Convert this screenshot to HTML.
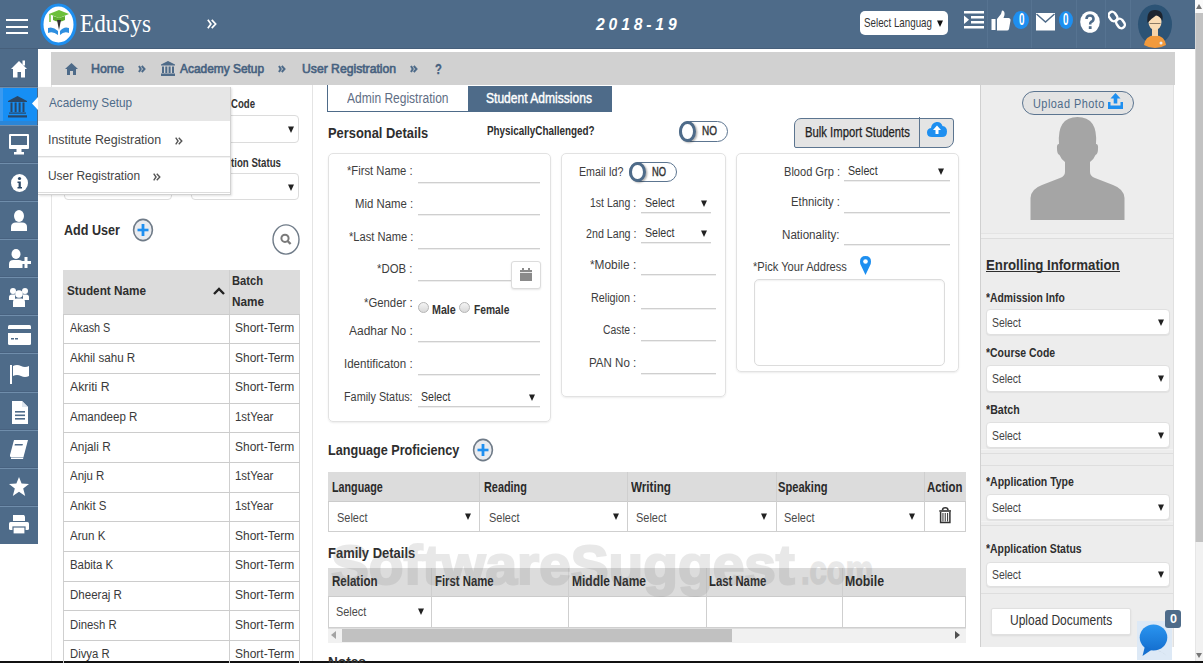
<!DOCTYPE html><html><head><meta charset="utf-8"><style>
html,body{margin:0;padding:0;width:1203px;height:663px;overflow:hidden;background:#fff;position:relative;}
.t{position:absolute;white-space:nowrap;transform-origin:0 0;}
.r{position:absolute;}
</style></head><body>
<div class="r" style="left:0px;top:0px;width:1195px;height:49px;background:#4e6b89;"></div>
<div class="r" style="left:0px;top:48px;width:1195px;height:1px;background:#465f7b;"></div>
<div class="r" style="left:0px;top:49px;width:38px;height:495px;background:#4e6b89;"></div>
<div class="r" style="left:0px;top:86px;width:38px;height:1px;background:#486280;"></div>
<div class="r" style="left:0px;top:87px;width:38px;height:1px;background:#6f8dab;"></div>
<div class="r" style="left:0px;top:124px;width:38px;height:1px;background:#486280;"></div>
<div class="r" style="left:0px;top:125px;width:38px;height:1px;background:#6f8dab;"></div>
<div class="r" style="left:0px;top:162px;width:38px;height:1px;background:#486280;"></div>
<div class="r" style="left:0px;top:163px;width:38px;height:1px;background:#6f8dab;"></div>
<div class="r" style="left:0px;top:200px;width:38px;height:1px;background:#486280;"></div>
<div class="r" style="left:0px;top:201px;width:38px;height:1px;background:#6f8dab;"></div>
<div class="r" style="left:0px;top:238px;width:38px;height:1px;background:#486280;"></div>
<div class="r" style="left:0px;top:239px;width:38px;height:1px;background:#6f8dab;"></div>
<div class="r" style="left:0px;top:276px;width:38px;height:1px;background:#486280;"></div>
<div class="r" style="left:0px;top:277px;width:38px;height:1px;background:#6f8dab;"></div>
<div class="r" style="left:0px;top:314px;width:38px;height:1px;background:#486280;"></div>
<div class="r" style="left:0px;top:315px;width:38px;height:1px;background:#6f8dab;"></div>
<div class="r" style="left:0px;top:352px;width:38px;height:1px;background:#486280;"></div>
<div class="r" style="left:0px;top:353px;width:38px;height:1px;background:#6f8dab;"></div>
<div class="r" style="left:0px;top:391px;width:38px;height:1px;background:#486280;"></div>
<div class="r" style="left:0px;top:392px;width:38px;height:1px;background:#6f8dab;"></div>
<div class="r" style="left:0px;top:429px;width:38px;height:1px;background:#486280;"></div>
<div class="r" style="left:0px;top:430px;width:38px;height:1px;background:#6f8dab;"></div>
<div class="r" style="left:0px;top:467px;width:38px;height:1px;background:#486280;"></div>
<div class="r" style="left:0px;top:468px;width:38px;height:1px;background:#6f8dab;"></div>
<div class="r" style="left:0px;top:505px;width:38px;height:1px;background:#486280;"></div>
<div class="r" style="left:0px;top:506px;width:38px;height:1px;background:#6f8dab;"></div>
<div class="r" style="left:0px;top:87.5px;width:37px;height:33.5px;background:#168ff5;"></div>
<div class="r" style="left:0px;top:121px;width:37px;height:4px;background:#2a86d8;"></div>
<div class="r" style="left:0px;top:87.5px;width:3px;height:33.5px;background:#3a9af0;"></div>
<div class="r" style="left:1195px;top:0px;width:8px;height:663px;background:#f1f1f1;border-left:1px solid #e6e6e6;box-sizing:border-box;"></div>
<div class="r" style="left:1195px;top:0px;width:8px;height:13px;background:#fafafa;"></div>
<div class="r" style="left:1195px;top:13px;width:8px;height:529px;background:#c2c2c2;border-left:1px solid #d6d6d6;box-sizing:border-box;"></div>
<svg class="r" style="left:1196px;top:653px" width="6" height="5" viewBox="0 0 6 5"><path d="M0 0 L6 0 L3 5 Z" fill="#777"/></svg>
<svg class="r" style="left:1196px;top:4px" width="6" height="5" viewBox="0 0 6 5"><path d="M0 5 L6 5 L3 0 Z" fill="#777"/></svg>
<div class="r" style="left:51px;top:52px;width:1124px;height:33px;background:#d1d1d1;"></div>
<div class="r" style="left:51px;top:85px;width:1px;height:578px;background:#e4e4e4;"></div>
<div class="r" style="left:312px;top:85px;width:1px;height:578px;background:#e4e4e4;"></div>
<div class="r" style="left:980px;top:85px;width:194px;height:562px;background:#ededed;border-left:1px solid #d0d0d0;border-right:1px solid #e0e0e0;box-sizing:border-box;"></div>
<div class="r" style="left:981px;top:233px;width:192px;height:1px;background:#e4e4e4;"></div>
<div class="r" style="left:981px;top:234px;width:192px;height:4px;background:#f0f0f0;"></div>
<div class="r" style="left:981px;top:238px;width:192px;height:1px;background:#dddddd;"></div>
<div class="r" style="left:981px;top:449px;width:192px;height:1px;background:#f3f3f3;"></div>
<div class="r" style="left:981px;top:453px;width:192px;height:1px;background:#dedede;"></div>
<div class="r" style="left:981px;top:465px;width:192px;height:1px;background:#dedede;"></div>
<div class="r" style="left:981px;top:521px;width:192px;height:1px;background:#f3f3f3;"></div>
<div class="r" style="left:981px;top:525px;width:192px;height:1px;background:#dedede;"></div>
<div class="r" style="left:981px;top:593px;width:192px;height:1px;background:#dedede;"></div>
<div class="r" style="left:0px;top:661px;width:1203px;height:2px;background:#111;"></div>
<div class="r" style="left:6px;top:19.3px;width:22px;height:2.1999999999999993px;background:#fff;"></div>
<div class="r" style="left:6px;top:25.5px;width:22px;height:2.1999999999999993px;background:#fff;"></div>
<div class="r" style="left:6px;top:31.7px;width:22px;height:2.1999999999999993px;background:#fff;"></div>
<svg class="r" style="left:40px;top:3px" width="37" height="43" viewBox="0 0 37 43"><ellipse cx="18.5" cy="21.5" rx="16.5" ry="19.5" fill="#fff" stroke="#1e8ff0" stroke-width="3"/><path d="M9 11 L19 7 L29 11 L19 15 Z" fill="#6cc03a"/><path d="M13 13 L13 17 Q19 20 25 17 L25 13 L19 15 Z" fill="#5fae2f"/><path d="M10 11 L10 19" stroke="#6cc03a" stroke-width="1.5"/><path d="M17 17 L19 27 L21 17 Z" fill="#333"/><path d="M8 25 Q13 23 18 28 L18 32 Q13 28 8 30 Z" fill="#2e8fe0"/><path d="M29 25 Q24 23 20 28 L20 32 Q24 28 29 30 Z" fill="#2e8fe0"/></svg>
<div class="t" style="left:80.00px;top:10.16px;font-size:25.08px;line-height:27.76px;font-weight:400;color:#fff;font-family:'Liberation Serif', serif;transform:scaleX(0.9257);">EduSys</div>
<svg class="r" style="left:206.5px;top:18.5px;overflow:visible" width="9.50" height="10.00" viewBox="0 0 9.50 10.00"><path d="M0.85 0.85 L3.90 5.00 L0.85 9.15 M4.75 0.85 L8.65 5.00 L4.75 9.15" stroke="#fff" stroke-width="1.7" fill="none"/></svg>
<div class="t" style="left:596.29px;top:15.07px;font-size:16.28px;line-height:18.18px;font-weight:700;color:#fff;font-family:'Liberation Sans', sans-serif;font-style:italic;letter-spacing:4px;transform:scaleX(0.9631);">2018-19</div>
<div class="r" style="left:860px;top:11px;width:88px;height:24px;background:#fff;border-radius:5px;"></div>
<div class="t" style="left:864.00px;top:16.82px;font-size:12.35px;line-height:13.80px;font-weight:400;color:#333;font-family:'Liberation Sans', sans-serif;transform:scaleX(0.7921);">Select Languag</div>
<svg class="r" style="left:937px;top:20.0px" width="6" height="7" viewBox="0 0 6 7"><path d="M0 0.5 L6 0.5 L3 7 Z" fill="#111"/></svg>
<div class="r" style="left:987px;top:0px;width:1px;height:48px;background:#567391;"></div>
<div class="r" style="left:1031px;top:0px;width:1px;height:48px;background:#567391;"></div>
<div class="r" style="left:1076px;top:0px;width:1px;height:48px;background:#567391;"></div>
<div class="r" style="left:1105px;top:0px;width:1px;height:48px;background:#567391;"></div>
<div class="r" style="left:1130px;top:0px;width:1px;height:48px;background:#567391;"></div>
<svg class="r" style="left:964px;top:11px" width="20" height="18" viewBox="0 0 20 18"><rect x="0" y="0" width="20" height="2.5" fill="#fff"/><rect x="7" y="5" width="13" height="2.5" fill="#fff"/><rect x="7" y="10" width="13" height="2.5" fill="#fff"/><rect x="0" y="15" width="20" height="2.5" fill="#fff"/><path d="M0 4.5 L5 8.7 L0 13 Z" fill="#fff"/></svg>
<svg class="r" style="left:991px;top:10px" width="20" height="21" viewBox="0 0 20 21"><rect x="0.5" y="9" width="4" height="11" fill="#fff"/><path d="M6 9 L10 4 L11 0.5 Q14 0.5 13.5 5 L12.5 8 L18 8 Q20 8.5 19.5 10.5 L18 19 Q17.5 20.5 16 20.5 L6 20.5 Z" fill="#fff"/></svg>
<div class="r" style="left:1013px;top:10.5px;width:15.5px;height:18px;border-radius:50%;background:#1e8ff0;"></div>
<div class="t" style="left:1018.50px;top:10.53px;font-size:15.99px;line-height:17.86px;font-weight:700;color:#fff;font-family:'Liberation Sans', sans-serif;transform:scaleX(0.6180);">0</div>
<svg class="r" style="left:1036px;top:13px" width="19" height="18" viewBox="0 0 19 18"><rect x="0" y="0" width="19" height="17.5" fill="#fff"/><path d="M0.5 1 L9.5 9 L18.5 1" stroke="#4e6b89" stroke-width="1.5" fill="none"/></svg>
<div class="r" style="left:1058.5px;top:10.5px;width:14px;height:18px;border-radius:50%;background:#1e8ff0;"></div>
<div class="t" style="left:1063.00px;top:10.53px;font-size:15.99px;line-height:17.86px;font-weight:700;color:#fff;font-family:'Liberation Sans', sans-serif;transform:scaleX(0.6180);">0</div>
<svg class="r" style="left:1080px;top:10.5px" width="20" height="22" viewBox="0 0 20 22"><ellipse cx="10" cy="11" rx="9.8" ry="10.8" fill="#fff"/><path d="M6.5 8 Q6.5 4.5 10 4.5 Q13.5 4.5 13.5 7.8 Q13.5 10 11 11 Q10.2 11.5 10.2 13.5" stroke="#4e6b89" stroke-width="2.6" fill="none"/><rect x="8.8" y="15.2" width="2.8" height="2.8" fill="#4e6b89"/></svg>
<svg class="r" style="left:1108px;top:10px" width="18" height="20" viewBox="0 0 18 20"><rect x="1.5" y="1.5" width="7" height="10" rx="3.5" transform="rotate(-35 5 6.5)" stroke="#fff" stroke-width="2.4" fill="none"/><rect x="9" y="8.5" width="7" height="10" rx="3.5" transform="rotate(-35 12.5 13.5)" stroke="#fff" stroke-width="2.4" fill="none"/></svg>
<svg class="r" style="left:1137px;top:4px" width="36" height="44" viewBox="0 0 36 44"><ellipse cx="18" cy="20.5" rx="17" ry="20" fill="#2c5375"/><path d="M7 41 Q8 32 18 31 Q28 32 29 41 Q24 44 18 44 Q12 44 7 41 Z" fill="#f29a3c"/><rect x="15" y="23" width="6" height="9" fill="#f6d3a8"/><ellipse cx="18" cy="18" rx="6.5" ry="8" fill="#f9dcb5"/><path d="M10.5 19 Q9 6 18 6 Q27 6 25.5 17 Q23 12 19 11.5 Q15 14 10.5 19 Z" fill="#1d2530"/><path d="M12.5 19.5 L23.5 19.5" stroke="#8a7a66" stroke-width="1"/><circle cx="24" cy="39" r="1.5" fill="#e8eef5"/></svg>
<svg class="r" style="left:65px;top:63px" width="13" height="12" viewBox="0 0 13 12"><path d="M6.5 0 L13 6 L11 6 L11 12 L8 12 L8 8 L5 8 L5 12 L2 12 L2 6 L0 6 Z" fill="#4e6b89"/></svg>
<div class="t" style="left:91.00px;top:61.50px;font-size:13.37px;line-height:14.94px;font-weight:400;color:#46617f;font-family:'Liberation Sans', sans-serif;transform:scaleX(0.9270);-webkit-text-stroke:0.65px #46617f;">Home</div>
<svg class="r" style="left:138px;top:65px;overflow:visible" width="7.50" height="8.00" viewBox="0 0 7.50 8.00"><path d="M1.00 1.00 L2.75 4.00 L1.00 7.00 M3.75 1.00 L6.50 4.00 L3.75 7.00" stroke="#4e6b89" stroke-width="2" fill="none"/></svg>
<svg class="r" style="left:161px;top:61px" width="14" height="15" viewBox="0 0 14 15"><path d="M7 0 L14 3.5 L14 4.5 L0 4.5 L0 3.5 Z" fill="#4e6b89"/><rect x="1" y="5.5" width="2" height="6.5" fill="#4e6b89"/><rect x="4.3" y="5.5" width="2" height="6.5" fill="#4e6b89"/><rect x="7.6" y="5.5" width="2" height="6.5" fill="#4e6b89"/><rect x="11" y="5.5" width="2" height="6.5" fill="#4e6b89"/><rect x="0" y="12.5" width="14" height="2.5" fill="#4e6b89"/></svg>
<div class="t" style="left:180.00px;top:61.50px;font-size:13.37px;line-height:14.94px;font-weight:400;color:#46617f;font-family:'Liberation Sans', sans-serif;transform:scaleX(0.8912);-webkit-text-stroke:0.65px #46617f;">Academy Setup</div>
<svg class="r" style="left:278px;top:65px;overflow:visible" width="7.50" height="8.00" viewBox="0 0 7.50 8.00"><path d="M1.00 1.00 L2.75 4.00 L1.00 7.00 M3.75 1.00 L6.50 4.00 L3.75 7.00" stroke="#4e6b89" stroke-width="2" fill="none"/></svg>
<div class="t" style="left:302.00px;top:61.50px;font-size:13.37px;line-height:14.94px;font-weight:400;color:#46617f;font-family:'Liberation Sans', sans-serif;transform:scaleX(0.9113);-webkit-text-stroke:0.65px #46617f;">User Registration</div>
<svg class="r" style="left:410px;top:65px;overflow:visible" width="7.50" height="8.00" viewBox="0 0 7.50 8.00"><path d="M1.00 1.00 L2.75 4.00 L1.00 7.00 M3.75 1.00 L6.50 4.00 L3.75 7.00" stroke="#4e6b89" stroke-width="2" fill="none"/></svg>
<div class="t" style="left:434.60px;top:60.85px;font-size:14.53px;line-height:16.24px;font-weight:700;color:#46617f;font-family:'Liberation Sans', sans-serif;transform:scaleX(0.7753);-webkit-text-stroke:0.3px #46617f;">?</div>
<svg class="r" style="left:11px;top:60px" width="16" height="18" viewBox="0 0 16 18"><path d="M8 1 L16 9 L14 9 L14 17.5 L10 17.5 L10 12 L6.5 12 L6.5 17.5 L2 17.5 L2 9 L0 9 Z" fill="#fff"/><rect x="11.5" y="0.5" width="2.5" height="5" fill="#fff"/></svg>
<svg class="r" style="left:8.4px;top:96px" width="19" height="22" viewBox="0 0 19 22"><path d="M9.5 0 L19 5 L19 6 L0 6 L0 5 Z" fill="#2a4766"/><rect x="2.5" y="6.5" width="2" height="9.5" fill="#2a4766"/><rect x="6.6" y="6.5" width="2" height="9.5" fill="#2a4766"/><rect x="10.6" y="6.5" width="2" height="9.5" fill="#2a4766"/><rect x="14.5" y="6.5" width="2" height="9.5" fill="#2a4766"/><rect x="1" y="16.5" width="17" height="1.2" fill="#2a4766"/><rect x="0" y="19.3" width="19" height="2.2" fill="#2a4766"/></svg>
<svg class="r" style="left:9px;top:134px" width="20" height="21" viewBox="0 0 20 21"><rect x="0" y="0" width="20" height="15" rx="1" fill="#fff"/><rect x="2" y="2" width="16" height="9" fill="#4e6b89"/><rect x="7.5" y="15" width="5" height="3" fill="#fff"/><rect x="5" y="18" width="10" height="2.5" fill="#fff"/></svg>
<svg class="r" style="left:11px;top:174px" width="17" height="18" viewBox="0 0 17 18"><ellipse cx="8.5" cy="9" rx="8.5" ry="9" fill="#fff"/><circle cx="8.5" cy="4.5" r="1.6" fill="#2a4766"/><path d="M6.5 7.5 L9.8 7.5 L9.8 13 L11 13 L11 14.5 L6.5 14.5 L6.5 13 L7.6 13 L7.6 9 L6.5 9 Z" fill="#2a4766"/></svg>
<svg class="r" style="left:11px;top:210px" width="16" height="21" viewBox="0 0 16 21"><ellipse cx="8" cy="6" rx="5" ry="6" fill="#fff"/><path d="M0 21 L0 17 Q0 12.5 5 12.5 L11 12.5 Q16 12.5 16 17 L16 21 Z" fill="#fff"/></svg>
<svg class="r" style="left:9px;top:249px" width="22" height="19" viewBox="0 0 22 19"><ellipse cx="7" cy="5" rx="4.5" ry="5" fill="#fff"/><path d="M0 19 L0 15 Q0 11 4.5 11 L10 11 Q13 11 13.5 13 L13.5 19 Z" fill="#fff"/><rect x="15.5" y="8" width="3" height="11" fill="#fff"/><rect x="11.5" y="12" width="10.5" height="3" fill="#fff"/></svg>
<svg class="r" style="left:9px;top:287px" width="20" height="20" viewBox="0 0 20 20"><circle cx="4" cy="4" r="3" fill="#fff"/><circle cx="16" cy="4" r="3" fill="#fff"/><path d="M0 13 L0 10 Q0 7.5 3 7.5 L6 7.5 L6 13 Z" fill="#fff"/><path d="M20 13 L20 10 Q20 7.5 17 7.5 L14 7.5 L14 13 Z" fill="#fff"/><circle cx="10" cy="7" r="3.8" fill="#fff"/><path d="M4 20 L4 15 Q4 11.5 8 11.5 L12 11.5 Q16 11.5 16 15 L16 20 Z" fill="#fff"/></svg>
<svg class="r" style="left:8px;top:325px" width="23" height="20" viewBox="0 0 23 20"><rect x="0" y="0" width="23" height="20" rx="1.5" fill="#fff"/><rect x="0" y="4" width="23" height="4" fill="#4e6b89"/><rect x="3" y="13" width="3" height="1.5" fill="#4e6b89"/><rect x="7" y="13" width="3" height="1.5" fill="#4e6b89"/></svg>
<svg class="r" style="left:10px;top:364px" width="19" height="20" viewBox="0 0 19 20"><rect x="0" y="1" width="2" height="19" fill="#fff"/><path d="M3 2 Q7 0 11 2 Q15 4 19 2 L19 12 Q15 14 11 12 Q7 10 3 12 Z" fill="#fff"/></svg>
<svg class="r" style="left:11.5px;top:400.5px" width="16" height="23" viewBox="0 0 16 23"><path d="M0 0 L10 0 L16 6 L16 23 L0 23 Z" fill="#fff"/><path d="M10 0 L10 6 L16 6" fill="#dfe6ee"/><rect x="3" y="10" width="10" height="1.6" fill="#4e6b89"/><rect x="3" y="13.5" width="10" height="1.6" fill="#4e6b89"/><rect x="3" y="17" width="10" height="1.6" fill="#4e6b89"/></svg>
<svg class="r" style="left:10px;top:440px" width="18" height="19" viewBox="0 0 18 19"><path d="M4 0 L18 0 L14 15 L0 15 Z" fill="#fff"/><path d="M0 15 L14 15 L13.5 17 L1 17 Q0 17 0 16 Z" fill="#fff"/><path d="M1 17.5 L13.5 17.5 L13 19 L1 19 Z" fill="#fff"/><rect x="6" y="4" width="8" height="1.5" fill="#4e6b89" transform="skewX(-15)"/></svg>
<svg class="r" style="left:9px;top:477px" width="20" height="19" viewBox="0 0 20 19"><path d="M10 0 L12.6 6.5 L20 7 L14.2 11.5 L16.2 19 L10 14.8 L3.8 19 L5.8 11.5 L0 7 L7.4 6.5 Z" fill="#fff"/></svg>
<svg class="r" style="left:9px;top:515px" width="20" height="19" viewBox="0 0 20 19"><rect x="4" y="0" width="11" height="6" fill="#fff"/><path d="M15 0 L16 1.5 L16 6 L15 6 Z" fill="#fff"/><rect x="0" y="7" width="20" height="8" rx="1.5" fill="#fff"/><rect x="4" y="12" width="12" height="7" fill="#fff" stroke="#4e6b89" stroke-width="1.2"/></svg>
<div class="t" style="left:231.00px;top:97.16px;font-size:13.08px;line-height:14.61px;font-weight:700;color:#333;font-family:'Liberation Sans', sans-serif;transform:scaleX(0.7328);">Code</div>
<div class="r" style="left:191px;top:115px;width:108px;height:28px;border:1px solid #dcdcdc;border-radius:4px;background:#fff;box-sizing:border-box;"></div>
<svg class="r" style="left:288px;top:125.5px" width="6" height="7" viewBox="0 0 6 7"><path d="M0 0.5 L6 0.5 L3 7 Z" fill="#222"/></svg>
<div class="r" style="left:64px;top:115px;width:108px;height:28px;border:1px solid #dcdcdc;border-radius:4px;background:#fff;box-sizing:border-box;"></div>
<div class="t" style="left:231.00px;top:156.16px;font-size:13.08px;line-height:14.61px;font-weight:700;color:#333;font-family:'Liberation Sans', sans-serif;transform:scaleX(0.7386);">tion Status</div>
<div class="r" style="left:191px;top:173px;width:108px;height:27px;border:1px solid #dcdcdc;border-radius:4px;background:#fff;box-sizing:border-box;"></div>
<svg class="r" style="left:288px;top:183.5px" width="6" height="7" viewBox="0 0 6 7"><path d="M0 0.5 L6 0.5 L3 7 Z" fill="#222"/></svg>
<div class="r" style="left:64px;top:173px;width:108px;height:27px;border:1px solid #dcdcdc;border-radius:4px;background:#fff;box-sizing:border-box;"></div>
<div class="t" style="left:64.00px;top:222.50px;font-size:13.81px;line-height:15.42px;font-weight:700;color:#2e2e2e;font-family:'Liberation Sans', sans-serif;transform:scaleX(0.9128);">Add User</div>
<svg class="r" style="left:131.7px;top:218.2px" width="22" height="24" viewBox="0 0 22 24"><ellipse cx="11" cy="12" rx="9.4" ry="10.6" fill="#e9ebef" stroke="#6f7b88" stroke-width="1.6"/><rect x="9.6" y="6" width="2.8" height="12" fill="#1e8ff0"/><rect x="5.5" y="10.7" width="11" height="2.6" fill="#1e8ff0"/></svg>
<svg class="r" style="left:272px;top:224px" width="28" height="31" viewBox="0 0 28 31"><ellipse cx="14" cy="15.5" rx="13" ry="14.6" fill="#fff" stroke="#6f7b88" stroke-width="1.4"/><circle cx="13" cy="14.3" r="3.6" fill="none" stroke="#7a7a7a" stroke-width="2"/><path d="M15.6 17 L18.6 20" stroke="#7a7a7a" stroke-width="2.4"/></svg>
<div class="r" style="left:63px;top:270px;width:237px;height:393px;border-left:1px solid #cfcfcf;border-right:1px solid #cfcfcf;box-sizing:border-box;"></div>
<div class="r" style="left:63px;top:270px;width:237px;height:44px;background:#dcdcdc;"></div>
<div class="r" style="left:228.5px;top:270px;width:1.0px;height:393px;background:#cfcfcf;"></div>
<div class="t" style="left:67.00px;top:284.40px;font-size:13.37px;line-height:14.94px;font-weight:700;color:#2e2e2e;font-family:'Liberation Sans', sans-serif;transform:scaleX(0.8802);">Student Name</div>
<svg class="r" style="left:213px;top:287px" width="12" height="8" viewBox="0 0 12 8"><path d="M1 7 L6 2 L11 7" stroke="#222" stroke-width="2.4" fill="none"/></svg>
<div class="t" style="left:232.00px;top:273.90px;font-size:13.37px;line-height:14.94px;font-weight:700;color:#2e2e2e;font-family:'Liberation Sans', sans-serif;transform:scaleX(0.8356);">Batch</div>
<div class="t" style="left:232.00px;top:294.90px;font-size:13.37px;line-height:14.94px;font-weight:700;color:#2e2e2e;font-family:'Liberation Sans', sans-serif;transform:scaleX(0.8803);">Name</div>
<div class="r" style="left:63px;top:314px;width:237px;height:1px;background:#cccccc;"></div>
<div class="t" style="left:70.00px;top:320.17px;font-size:13.52px;line-height:15.10px;font-weight:400;color:#3a3a3a;font-family:'Liberation Sans', sans-serif;transform:scaleX(0.8012);">Akash S</div>
<div class="t" style="left:234.60px;top:320.17px;font-size:13.52px;line-height:15.10px;font-weight:400;color:#3a3a3a;font-family:'Liberation Sans', sans-serif;transform:scaleX(0.8869);">Short-Term</div>
<div class="r" style="left:63px;top:343px;width:237px;height:1px;background:#cccccc;"></div>
<div class="t" style="left:70.00px;top:349.82px;font-size:13.52px;line-height:15.10px;font-weight:400;color:#3a3a3a;font-family:'Liberation Sans', sans-serif;transform:scaleX(0.8602);">Akhil sahu R</div>
<div class="t" style="left:234.60px;top:349.82px;font-size:13.52px;line-height:15.10px;font-weight:400;color:#3a3a3a;font-family:'Liberation Sans', sans-serif;transform:scaleX(0.8869);">Short-Term</div>
<div class="r" style="left:63px;top:373px;width:237px;height:1px;background:#cccccc;"></div>
<div class="t" style="left:70.00px;top:379.47px;font-size:13.52px;line-height:15.10px;font-weight:400;color:#3a3a3a;font-family:'Liberation Sans', sans-serif;transform:scaleX(0.9080);">Akriti R</div>
<div class="t" style="left:234.60px;top:379.47px;font-size:13.52px;line-height:15.10px;font-weight:400;color:#3a3a3a;font-family:'Liberation Sans', sans-serif;transform:scaleX(0.8869);">Short-Term</div>
<div class="r" style="left:63px;top:403px;width:237px;height:1px;background:#cccccc;"></div>
<div class="t" style="left:70.00px;top:409.12px;font-size:13.52px;line-height:15.10px;font-weight:400;color:#3a3a3a;font-family:'Liberation Sans', sans-serif;transform:scaleX(0.8541);">Amandeep R</div>
<div class="t" style="left:234.60px;top:409.12px;font-size:13.52px;line-height:15.10px;font-weight:400;color:#3a3a3a;font-family:'Liberation Sans', sans-serif;transform:scaleX(0.8477);">1stYear</div>
<div class="r" style="left:63px;top:432px;width:237px;height:1px;background:#cccccc;"></div>
<div class="t" style="left:70.00px;top:438.77px;font-size:13.52px;line-height:15.10px;font-weight:400;color:#3a3a3a;font-family:'Liberation Sans', sans-serif;transform:scaleX(0.8731);">Anjali R</div>
<div class="t" style="left:234.60px;top:438.77px;font-size:13.52px;line-height:15.10px;font-weight:400;color:#3a3a3a;font-family:'Liberation Sans', sans-serif;transform:scaleX(0.8869);">Short-Term</div>
<div class="r" style="left:63px;top:462px;width:237px;height:1px;background:#cccccc;"></div>
<div class="t" style="left:70.00px;top:468.42px;font-size:13.52px;line-height:15.10px;font-weight:400;color:#3a3a3a;font-family:'Liberation Sans', sans-serif;transform:scaleX(0.8469);">Anju R</div>
<div class="t" style="left:234.60px;top:468.42px;font-size:13.52px;line-height:15.10px;font-weight:400;color:#3a3a3a;font-family:'Liberation Sans', sans-serif;transform:scaleX(0.8477);">1stYear</div>
<div class="r" style="left:63px;top:492px;width:237px;height:1px;background:#cccccc;"></div>
<div class="t" style="left:70.00px;top:498.07px;font-size:13.52px;line-height:15.10px;font-weight:400;color:#3a3a3a;font-family:'Liberation Sans', sans-serif;transform:scaleX(0.8515);">Ankit S</div>
<div class="t" style="left:234.60px;top:498.07px;font-size:13.52px;line-height:15.10px;font-weight:400;color:#3a3a3a;font-family:'Liberation Sans', sans-serif;transform:scaleX(0.8477);">1stYear</div>
<div class="r" style="left:63px;top:521px;width:237px;height:1px;background:#cccccc;"></div>
<div class="t" style="left:70.00px;top:527.72px;font-size:13.52px;line-height:15.10px;font-weight:400;color:#3a3a3a;font-family:'Liberation Sans', sans-serif;transform:scaleX(0.8582);">Arun K</div>
<div class="t" style="left:234.60px;top:527.72px;font-size:13.52px;line-height:15.10px;font-weight:400;color:#3a3a3a;font-family:'Liberation Sans', sans-serif;transform:scaleX(0.8869);">Short-Term</div>
<div class="r" style="left:63px;top:551px;width:237px;height:1px;background:#cccccc;"></div>
<div class="t" style="left:70.00px;top:557.37px;font-size:13.52px;line-height:15.10px;font-weight:400;color:#3a3a3a;font-family:'Liberation Sans', sans-serif;transform:scaleX(0.8443);">Babita K</div>
<div class="t" style="left:234.60px;top:557.37px;font-size:13.52px;line-height:15.10px;font-weight:400;color:#3a3a3a;font-family:'Liberation Sans', sans-serif;transform:scaleX(0.8869);">Short-Term</div>
<div class="r" style="left:63px;top:581px;width:237px;height:1px;background:#cccccc;"></div>
<div class="t" style="left:70.00px;top:587.02px;font-size:13.52px;line-height:15.10px;font-weight:400;color:#3a3a3a;font-family:'Liberation Sans', sans-serif;transform:scaleX(0.8536);">Dheeraj R</div>
<div class="t" style="left:234.60px;top:587.02px;font-size:13.52px;line-height:15.10px;font-weight:400;color:#3a3a3a;font-family:'Liberation Sans', sans-serif;transform:scaleX(0.8869);">Short-Term</div>
<div class="r" style="left:63px;top:610px;width:237px;height:1px;background:#cccccc;"></div>
<div class="t" style="left:70.00px;top:616.67px;font-size:13.52px;line-height:15.10px;font-weight:400;color:#3a3a3a;font-family:'Liberation Sans', sans-serif;transform:scaleX(0.8396);">Dinesh R</div>
<div class="t" style="left:234.60px;top:616.67px;font-size:13.52px;line-height:15.10px;font-weight:400;color:#3a3a3a;font-family:'Liberation Sans', sans-serif;transform:scaleX(0.8869);">Short-Term</div>
<div class="r" style="left:63px;top:640px;width:237px;height:1px;background:#cccccc;"></div>
<div class="t" style="left:70.00px;top:646.32px;font-size:13.52px;line-height:15.10px;font-weight:400;color:#3a3a3a;font-family:'Liberation Sans', sans-serif;transform:scaleX(0.8381);">Divya R</div>
<div class="t" style="left:234.60px;top:646.32px;font-size:13.52px;line-height:15.10px;font-weight:400;color:#3a3a3a;font-family:'Liberation Sans', sans-serif;transform:scaleX(0.8869);">Short-Term</div>
<div class="r" style="left:38px;top:87px;width:192.5px;height:108px;background:#fff;border:1px solid #d2d2d2;border-left:none;box-sizing:border-box;box-shadow:1px 1px 2px rgba(0,0,0,0.12);"></div>
<div class="r" style="left:38px;top:87px;width:191.5px;height:34px;background:#e6e6e6;"></div>
<div class="r" style="left:38px;top:156px;width:191.5px;height:1px;background:#dddddd;"></div>
<div class="r" style="left:38px;top:157px;width:191.5px;height:1px;background:#f2f2f2;"></div>
<div class="r" style="left:38px;top:192px;width:191.5px;height:1px;background:#dddddd;"></div>
<svg class="r" style="left:32px;top:97px" width="6" height="13" viewBox="0 0 6 13"><path d="M6 0 L0 6.5 L6 13 Z" fill="#fff"/></svg>
<div class="t" style="left:48.50px;top:95.90px;font-size:13.37px;line-height:14.94px;font-weight:400;color:#4e6b89;font-family:'Liberation Sans', sans-serif;transform:scaleX(0.8806);">Academy Setup</div>
<div class="t" style="left:48.00px;top:132.90px;font-size:13.37px;line-height:14.94px;font-weight:400;color:#444;font-family:'Liberation Sans', sans-serif;transform:scaleX(0.9285);">Institute Registration</div>
<svg class="r" style="left:174.5px;top:136.5px;overflow:visible" width="7.50" height="8.00" viewBox="0 0 7.50 8.00"><path d="M0.70 0.70 L3.05 4.00 L0.70 7.30 M3.75 0.70 L6.80 4.00 L3.75 7.30" stroke="#555" stroke-width="1.4" fill="none"/></svg>
<div class="t" style="left:48.00px;top:169.40px;font-size:13.37px;line-height:14.94px;font-weight:400;color:#444;font-family:'Liberation Sans', sans-serif;transform:scaleX(0.8919);">User Registration</div>
<svg class="r" style="left:152.5px;top:173px;overflow:visible" width="7.50" height="8.00" viewBox="0 0 7.50 8.00"><path d="M0.70 0.70 L3.05 4.00 L0.70 7.30 M3.75 0.70 L6.80 4.00 L3.75 7.30" stroke="#555" stroke-width="1.4" fill="none"/></svg>
<div class="r" style="left:327px;top:85px;width:141px;height:27px;border-left:1px solid #4e6b89;border-bottom:1.5px solid #4e6b89;box-sizing:border-box;background:#fff;"></div>
<div class="r" style="left:468px;top:85.5px;width:144px;height:26.5px;background:#4e6b89;"></div>
<div class="t" style="left:346.80px;top:90.77px;font-size:13.95px;line-height:15.59px;font-weight:400;color:#5f6e84;font-family:'Liberation Sans', sans-serif;transform:scaleX(0.8621);">Admin Registration</div>
<div class="t" style="left:485.80px;top:90.77px;font-size:13.95px;line-height:15.59px;font-weight:400;color:#fff;font-family:'Liberation Sans', sans-serif;transform:scaleX(0.8653);-webkit-text-stroke:0.4px #fff;">Student Admissions</div>
<div class="t" style="left:328.00px;top:124.85px;font-size:14.53px;line-height:16.24px;font-weight:700;color:#2e2e2e;font-family:'Liberation Sans', sans-serif;transform:scaleX(0.8878);">Personal Details</div>
<div class="t" style="left:486.60px;top:123.92px;font-size:12.79px;line-height:14.29px;font-weight:700;color:#2e2e2e;font-family:'Liberation Sans', sans-serif;transform:scaleX(0.7723);">PhysicallyChallenged?</div>
<div class="r" style="left:679px;top:120.5px;width:49px;height:21.0px;border:1.2px solid #5c7590;border-radius:10.5px;box-sizing:border-box;background:#fff;"></div>
<div class="r" style="left:679px;top:120.5px;width:16.5px;height:21.0px;border:3.5px solid #4e6b89;border-radius:50%;box-sizing:border-box;background:#fff;box-shadow:1.5px 1px 2px rgba(0,0,0,0.3);"></div>
<div class="t" style="left:702.00px;top:124.36px;font-size:13.08px;line-height:14.61px;font-weight:400;color:#333;font-family:'Liberation Sans', sans-serif;transform:scaleX(0.7634);-webkit-text-stroke:0.45px #333;">NO</div>
<div class="r" style="left:794px;top:117.5px;width:159.5px;height:30.5px;background:#e4e4e4;border:1.3px solid #5c7590;border-radius:7px 3px 8px 2px;box-sizing:border-box;"></div>
<div class="r" style="left:919px;top:117px;width:1.2999999999999545px;height:31px;background:#5c7590;"></div>
<div class="t" style="left:805.00px;top:125.37px;font-size:13.95px;line-height:15.59px;font-weight:400;color:#222;font-family:'Liberation Sans', sans-serif;transform:scaleX(0.8108);-webkit-text-stroke:0.25px #222;">Bulk Import Students</div>
<svg class="r" style="left:927px;top:121px" width="20" height="17" viewBox="0 0 20 17"><path d="M5 16 Q0 16 0 11.5 Q0 7.5 4 7 Q4.5 2 9.5 1 Q14 0.5 15.5 5 Q20 5.5 20 10.5 Q20 16 15 16 Z" fill="#1e8ff0"/><path d="M10 4.5 L14 9 L11.5 9 L11.5 13 L8.5 13 L8.5 9 L6 9 Z" fill="#fff"/></svg>
<div class="r" style="left:327.5px;top:153px;width:223.0px;height:269px;border:1px solid #e2e2e2;border-radius:5px;box-sizing:border-box;box-shadow:0 1px 2px rgba(0,0,0,0.08);"></div>
<div class="r" style="left:560.5px;top:153px;width:165.0px;height:243.5px;border:1px solid #e2e2e2;border-radius:5px;box-sizing:border-box;box-shadow:0 1px 2px rgba(0,0,0,0.08);"></div>
<div class="r" style="left:735.5px;top:153px;width:223.0px;height:219px;border:1px solid #e2e2e2;border-radius:5px;box-sizing:border-box;box-shadow:0 1px 2px rgba(0,0,0,0.08);"></div>
<div class="t" style="left:347.30px;top:163.37px;font-size:13.52px;line-height:15.10px;font-weight:400;color:#3d3d3d;font-family:'Liberation Sans', sans-serif;transform:scaleX(0.8317);">*First Name :</div>
<div class="r" style="left:417.5px;top:182px;width:122.0px;height:1px;background:#cfcfcf;"></div>
<div class="r" style="left:417.5px;top:183px;width:122.0px;height:1px;background:#eeeeee;"></div>
<div class="t" style="left:354.80px;top:196.37px;font-size:13.52px;line-height:15.10px;font-weight:400;color:#3d3d3d;font-family:'Liberation Sans', sans-serif;transform:scaleX(0.8406);">Mid Name :</div>
<div class="r" style="left:417.5px;top:214px;width:122.0px;height:1px;background:#cfcfcf;"></div>
<div class="r" style="left:417.5px;top:215px;width:122.0px;height:1px;background:#eeeeee;"></div>
<div class="t" style="left:348.50px;top:229.37px;font-size:13.52px;line-height:15.10px;font-weight:400;color:#3d3d3d;font-family:'Liberation Sans', sans-serif;transform:scaleX(0.8238);">*Last Name :</div>
<div class="r" style="left:417.5px;top:248px;width:122.0px;height:1px;background:#cfcfcf;"></div>
<div class="r" style="left:417.5px;top:249px;width:122.0px;height:1px;background:#eeeeee;"></div>
<div class="t" style="left:377.40px;top:261.37px;font-size:13.52px;line-height:15.10px;font-weight:400;color:#3d3d3d;font-family:'Liberation Sans', sans-serif;transform:scaleX(0.8429);">*DOB :</div>
<div class="r" style="left:417.5px;top:280px;width:94.5px;height:1px;background:#cfcfcf;"></div>
<div class="r" style="left:417.5px;top:281px;width:94.5px;height:1px;background:#eeeeee;"></div>
<div class="r" style="left:511px;top:261px;width:29.5px;height:27.5px;border:1px solid #dcdcdc;border-radius:3px;background:#fff;box-sizing:border-box;box-shadow:0 1px 2px rgba(0,0,0,0.1);"></div>
<svg class="r" style="left:519.5px;top:268px" width="12" height="13" viewBox="0 0 12 13"><rect x="0" y="2" width="12" height="11" fill="#8a8a8a"/><rect x="2" y="0" width="2" height="3" fill="#8a8a8a"/><rect x="8" y="0" width="2" height="3" fill="#8a8a8a"/><rect x="0" y="4" width="12" height="0.8" fill="#fff"/></svg>
<div class="t" style="left:364.30px;top:295.37px;font-size:13.52px;line-height:15.10px;font-weight:400;color:#3d3d3d;font-family:'Liberation Sans', sans-serif;transform:scaleX(0.8391);">*Gender :</div>
<div class="r" style="left:418.0px;top:301.5px;width:11px;height:11px;border-radius:50%;border:1px solid #b5b5b5;background:linear-gradient(#f4f4f4,#d9d9d9);box-sizing:border-box;"></div>
<div class="t" style="left:432.20px;top:302.76px;font-size:13.08px;line-height:14.61px;font-weight:700;color:#333;font-family:'Liberation Sans', sans-serif;transform:scaleX(0.8179);">Male</div>
<div class="r" style="left:459.0px;top:301.5px;width:11px;height:11px;border-radius:50%;border:1px solid #b5b5b5;background:linear-gradient(#f4f4f4,#d9d9d9);box-sizing:border-box;"></div>
<div class="t" style="left:474.00px;top:302.76px;font-size:13.08px;line-height:14.61px;font-weight:700;color:#333;font-family:'Liberation Sans', sans-serif;transform:scaleX(0.7841);">Female</div>
<div class="t" style="left:349.00px;top:323.37px;font-size:13.52px;line-height:15.10px;font-weight:400;color:#3d3d3d;font-family:'Liberation Sans', sans-serif;transform:scaleX(0.8855);">Aadhar No :</div>
<div class="r" style="left:417.5px;top:341px;width:122.0px;height:1px;background:#cfcfcf;"></div>
<div class="r" style="left:417.5px;top:342px;width:122.0px;height:1px;background:#eeeeee;"></div>
<div class="t" style="left:344.30px;top:356.37px;font-size:13.52px;line-height:15.10px;font-weight:400;color:#3d3d3d;font-family:'Liberation Sans', sans-serif;transform:scaleX(0.8531);">Identificaton :</div>
<div class="r" style="left:417.5px;top:374px;width:122.0px;height:1px;background:#cfcfcf;"></div>
<div class="r" style="left:417.5px;top:375px;width:122.0px;height:1px;background:#eeeeee;"></div>
<div class="t" style="left:344.30px;top:389.37px;font-size:13.52px;line-height:15.10px;font-weight:400;color:#3d3d3d;font-family:'Liberation Sans', sans-serif;transform:scaleX(0.8012);">Family Status:</div>
<div class="t" style="left:421.30px;top:389.76px;font-size:13.08px;line-height:14.61px;font-weight:400;color:#333;font-family:'Liberation Sans', sans-serif;transform:scaleX(0.8104);">Select</div>
<svg class="r" style="left:529px;top:393.5px" width="6" height="7" viewBox="0 0 6 7"><path d="M0 0.5 L6 0.5 L3 7 Z" fill="#222"/></svg>
<div class="r" style="left:417.5px;top:406px;width:122.0px;height:1px;background:#cfcfcf;"></div>
<div class="r" style="left:417.5px;top:407px;width:122.0px;height:1px;background:#eeeeee;"></div>
<div class="t" style="left:579.30px;top:163.77px;font-size:13.52px;line-height:15.10px;font-weight:400;color:#3d3d3d;font-family:'Liberation Sans', sans-serif;transform:scaleX(0.7893);">Email Id?</div>
<div class="r" style="left:629px;top:162px;width:48px;height:20px;border:1.2px solid #5c7590;border-radius:10.0px;box-sizing:border-box;background:#fff;"></div>
<div class="r" style="left:629px;top:162px;width:16.5px;height:20px;border:3.5px solid #4e6b89;border-radius:50%;box-sizing:border-box;background:#fff;box-shadow:1.5px 1px 2px rgba(0,0,0,0.3);"></div>
<div class="t" style="left:652.00px;top:165.36px;font-size:13.08px;line-height:14.61px;font-weight:400;color:#333;font-family:'Liberation Sans', sans-serif;transform:scaleX(0.7125);-webkit-text-stroke:0.45px #333;">NO</div>
<div class="t" style="left:590.00px;top:195.37px;font-size:13.52px;line-height:15.10px;font-weight:400;color:#3d3d3d;font-family:'Liberation Sans', sans-serif;transform:scaleX(0.7757);">1st Lang :</div>
<div class="t" style="left:644.80px;top:195.76px;font-size:13.08px;line-height:14.61px;font-weight:400;color:#333;font-family:'Liberation Sans', sans-serif;transform:scaleX(0.8132);">Select</div>
<svg class="r" style="left:701px;top:199.5px" width="6" height="7" viewBox="0 0 6 7"><path d="M0 0.5 L6 0.5 L3 7 Z" fill="#222"/></svg>
<div class="r" style="left:640.5px;top:212px;width:70.5px;height:1px;background:#cfcfcf;"></div>
<div class="r" style="left:640.5px;top:213px;width:70.5px;height:1px;background:#eeeeee;"></div>
<div class="t" style="left:585.60px;top:226.07px;font-size:13.52px;line-height:15.10px;font-weight:400;color:#3d3d3d;font-family:'Liberation Sans', sans-serif;transform:scaleX(0.7900);">2nd Lang :</div>
<div class="t" style="left:644.80px;top:226.46px;font-size:13.08px;line-height:14.61px;font-weight:400;color:#333;font-family:'Liberation Sans', sans-serif;transform:scaleX(0.8132);">Select</div>
<svg class="r" style="left:701px;top:230.2px" width="6" height="7" viewBox="0 0 6 7"><path d="M0 0.5 L6 0.5 L3 7 Z" fill="#222"/></svg>
<div class="r" style="left:640.5px;top:242px;width:70.5px;height:1px;background:#cfcfcf;"></div>
<div class="r" style="left:640.5px;top:243px;width:70.5px;height:1px;background:#eeeeee;"></div>
<div class="t" style="left:589.90px;top:256.77px;font-size:13.52px;line-height:15.10px;font-weight:400;color:#3d3d3d;font-family:'Liberation Sans', sans-serif;transform:scaleX(0.8781);">*Mobile :</div>
<div class="r" style="left:640.5px;top:274px;width:75.0px;height:1px;background:#cfcfcf;"></div>
<div class="r" style="left:640.5px;top:275px;width:75.0px;height:1px;background:#eeeeee;"></div>
<div class="t" style="left:591.00px;top:289.77px;font-size:13.52px;line-height:15.10px;font-weight:400;color:#3d3d3d;font-family:'Liberation Sans', sans-serif;transform:scaleX(0.7993);">Religion :</div>
<div class="r" style="left:640.5px;top:308px;width:75.0px;height:1px;background:#cfcfcf;"></div>
<div class="r" style="left:640.5px;top:309px;width:75.0px;height:1px;background:#eeeeee;"></div>
<div class="t" style="left:603.20px;top:322.37px;font-size:13.52px;line-height:15.10px;font-weight:400;color:#3d3d3d;font-family:'Liberation Sans', sans-serif;transform:scaleX(0.7673);">Caste :</div>
<div class="r" style="left:640.5px;top:340px;width:75.0px;height:1px;background:#cfcfcf;"></div>
<div class="r" style="left:640.5px;top:341px;width:75.0px;height:1px;background:#eeeeee;"></div>
<div class="t" style="left:588.80px;top:355.37px;font-size:13.52px;line-height:15.10px;font-weight:400;color:#3d3d3d;font-family:'Liberation Sans', sans-serif;transform:scaleX(0.8543);">PAN No :</div>
<div class="r" style="left:640.5px;top:373px;width:75.0px;height:1px;background:#cfcfcf;"></div>
<div class="r" style="left:640.5px;top:374px;width:75.0px;height:1px;background:#eeeeee;"></div>
<div class="t" style="left:783.80px;top:163.77px;font-size:13.52px;line-height:15.10px;font-weight:400;color:#3d3d3d;font-family:'Liberation Sans', sans-serif;transform:scaleX(0.8184);">Blood Grp :</div>
<div class="t" style="left:848.00px;top:164.16px;font-size:13.08px;line-height:14.61px;font-weight:400;color:#333;font-family:'Liberation Sans', sans-serif;transform:scaleX(0.8159);">Select</div>
<svg class="r" style="left:938px;top:167.9px" width="6" height="7" viewBox="0 0 6 7"><path d="M0 0.5 L6 0.5 L3 7 Z" fill="#222"/></svg>
<div class="r" style="left:844px;top:180px;width:105.5px;height:1px;background:#cfcfcf;"></div>
<div class="r" style="left:844px;top:181px;width:105.5px;height:1px;background:#eeeeee;"></div>
<div class="t" style="left:790.80px;top:194.37px;font-size:13.52px;line-height:15.10px;font-weight:400;color:#3d3d3d;font-family:'Liberation Sans', sans-serif;transform:scaleX(0.8359);">Ethnicity :</div>
<div class="r" style="left:844px;top:212px;width:105.5px;height:1px;background:#cfcfcf;"></div>
<div class="r" style="left:844px;top:213px;width:105.5px;height:1px;background:#eeeeee;"></div>
<div class="t" style="left:782.30px;top:227.07px;font-size:13.52px;line-height:15.10px;font-weight:400;color:#3d3d3d;font-family:'Liberation Sans', sans-serif;transform:scaleX(0.8593);">Nationality:</div>
<div class="r" style="left:844px;top:244px;width:105.5px;height:1px;background:#cfcfcf;"></div>
<div class="r" style="left:844px;top:245px;width:105.5px;height:1px;background:#eeeeee;"></div>
<div class="t" style="left:753.20px;top:259.37px;font-size:13.52px;line-height:15.10px;font-weight:400;color:#3d3d3d;font-family:'Liberation Sans', sans-serif;transform:scaleX(0.8224);">*Pick Your Address</div>
<svg class="r" style="left:859.5px;top:255.5px" width="11" height="19" viewBox="0 0 11 19"><path d="M5.5 19 L1 9.5 Q0 8 0 5.5 Q0 0 5.5 0 Q11 0 11 5.5 Q11 8 10 9.5 Z" fill="#1e8ff0"/><circle cx="5.5" cy="5.5" r="2.3" fill="#fff"/></svg>
<div class="r" style="left:753.5px;top:279px;width:191.5px;height:87px;border:1px solid #dcdcdc;border-radius:5px;box-sizing:border-box;box-shadow:inset 0 1px 2px rgba(0,0,0,0.06);"></div>
<div class="t" style="left:328.00px;top:441.85px;font-size:14.53px;line-height:16.24px;font-weight:700;color:#2e2e2e;font-family:'Liberation Sans', sans-serif;transform:scaleX(0.8710);">Language Proficiency</div>
<svg class="r" style="left:471.6px;top:438.3px" width="22" height="24" viewBox="0 0 22 24"><ellipse cx="11" cy="12" rx="9.4" ry="10.6" fill="#e9ebef" stroke="#6f7b88" stroke-width="1.6"/><rect x="9.6" y="6" width="2.8" height="12" fill="#1e8ff0"/><rect x="5.5" y="10.7" width="11" height="2.6" fill="#1e8ff0"/></svg>
<div class="r" style="left:327.6px;top:472.3px;width:638.4px;height:59.99999999999994px;border:1px solid #cfcfcf;border-top:none;box-sizing:border-box;"></div>
<div class="r" style="left:327.6px;top:472.3px;width:638.4px;height:30.0px;background:#dcdcdc;border-bottom:1px solid #cbcbcb;box-sizing:border-box;"></div>
<div class="r" style="left:479.3px;top:472.3px;width:1.0px;height:59.99999999999994px;background:#cfcfcf;"></div>
<div class="r" style="left:626.8px;top:472.3px;width:1.0px;height:59.99999999999994px;background:#cfcfcf;"></div>
<div class="r" style="left:775.5px;top:472.3px;width:1.0px;height:59.99999999999994px;background:#cfcfcf;"></div>
<div class="r" style="left:923.5px;top:472.3px;width:1.0px;height:59.99999999999994px;background:#cfcfcf;"></div>
<div class="t" style="left:331.60px;top:479.50px;font-size:13.81px;line-height:15.42px;font-weight:700;color:#2a2a2a;font-family:'Liberation Sans', sans-serif;transform:scaleX(0.7782);">Language</div>
<div class="t" style="left:483.70px;top:479.50px;font-size:13.81px;line-height:15.42px;font-weight:700;color:#2a2a2a;font-family:'Liberation Sans', sans-serif;transform:scaleX(0.7879);">Reading</div>
<div class="t" style="left:630.80px;top:479.50px;font-size:13.81px;line-height:15.42px;font-weight:700;color:#2a2a2a;font-family:'Liberation Sans', sans-serif;transform:scaleX(0.8466);">Writing</div>
<div class="t" style="left:778.40px;top:479.50px;font-size:13.81px;line-height:15.42px;font-weight:700;color:#2a2a2a;font-family:'Liberation Sans', sans-serif;transform:scaleX(0.8068);">Speaking</div>
<div class="t" style="left:926.60px;top:479.50px;font-size:13.81px;line-height:15.42px;font-weight:700;color:#2a2a2a;font-family:'Liberation Sans', sans-serif;transform:scaleX(0.8242);">Action</div>
<div class="t" style="left:337.00px;top:510.96px;font-size:13.08px;line-height:14.61px;font-weight:400;color:#4a4a4a;font-family:'Liberation Sans', sans-serif;transform:scaleX(0.8379);">Select</div>
<svg class="r" style="left:465px;top:513.0px" width="6" height="7" viewBox="0 0 6 7"><path d="M0 0.5 L6 0.5 L3 7 Z" fill="#222"/></svg>
<div class="t" style="left:489.30px;top:510.96px;font-size:13.08px;line-height:14.61px;font-weight:400;color:#4a4a4a;font-family:'Liberation Sans', sans-serif;transform:scaleX(0.8379);">Select</div>
<svg class="r" style="left:612.8px;top:513.0px" width="6" height="7" viewBox="0 0 6 7"><path d="M0 0.5 L6 0.5 L3 7 Z" fill="#222"/></svg>
<div class="t" style="left:636.20px;top:510.96px;font-size:13.08px;line-height:14.61px;font-weight:400;color:#4a4a4a;font-family:'Liberation Sans', sans-serif;transform:scaleX(0.8379);">Select</div>
<svg class="r" style="left:761px;top:513.0px" width="6" height="7" viewBox="0 0 6 7"><path d="M0 0.5 L6 0.5 L3 7 Z" fill="#222"/></svg>
<div class="t" style="left:784.30px;top:510.96px;font-size:13.08px;line-height:14.61px;font-weight:400;color:#4a4a4a;font-family:'Liberation Sans', sans-serif;transform:scaleX(0.8379);">Select</div>
<svg class="r" style="left:909px;top:513.0px" width="6" height="7" viewBox="0 0 6 7"><path d="M0 0.5 L6 0.5 L3 7 Z" fill="#222"/></svg>
<svg class="r" style="left:938.5px;top:506.5px" width="12.5" height="17" viewBox="0 0 12.5 17"><path d="M3.5 3.2 Q3.5 0.8 6.25 0.8 Q9 0.8 9 3.2" fill="none" stroke="#333" stroke-width="1.5"/><rect x="0.3" y="3.2" width="11.9" height="1.6" fill="#333"/><path d="M1.6 5 L1.6 15.6 L10.9 15.6 L10.9 5" fill="none" stroke="#333" stroke-width="1.5"/><rect x="3.4" y="6" width="1.1" height="8.5" fill="#444"/><rect x="5.7" y="6" width="1.1" height="8.5" fill="#444"/><rect x="8" y="6" width="1.1" height="8.5" fill="#444"/></svg>
<div class="t" style="left:328.00px;top:544.85px;font-size:14.53px;line-height:16.24px;font-weight:700;color:#2e2e2e;font-family:'Liberation Sans', sans-serif;transform:scaleX(0.8932);">Family Details</div>
<div class="r" style="left:327.6px;top:568px;width:638.4px;height:59.5px;border:1px solid #cfcfcf;border-top:none;box-sizing:border-box;"></div>
<div class="r" style="left:327.6px;top:568px;width:638.4px;height:29.299999999999955px;background:#dcdcdc;border-bottom:1px solid #cbcbcb;box-sizing:border-box;"></div>
<div class="r" style="left:430.7px;top:568px;width:1.0px;height:59.5px;background:#cfcfcf;"></div>
<div class="r" style="left:568.4px;top:568px;width:1.0px;height:59.5px;background:#cfcfcf;"></div>
<div class="r" style="left:705.6px;top:568px;width:1.0px;height:59.5px;background:#cfcfcf;"></div>
<div class="r" style="left:842px;top:568px;width:1px;height:59.5px;background:#cfcfcf;"></div>
<div class="t" style="left:332.40px;top:574.20px;font-size:13.81px;line-height:15.42px;font-weight:700;color:#2a2a2a;font-family:'Liberation Sans', sans-serif;transform:scaleX(0.8356);">Relation</div>
<div class="t" style="left:435.30px;top:574.20px;font-size:13.81px;line-height:15.42px;font-weight:700;color:#2a2a2a;font-family:'Liberation Sans', sans-serif;transform:scaleX(0.8227);">First Name</div>
<div class="t" style="left:572.00px;top:574.20px;font-size:13.81px;line-height:15.42px;font-weight:700;color:#2a2a2a;font-family:'Liberation Sans', sans-serif;transform:scaleX(0.8696);">Middle Name</div>
<div class="t" style="left:708.70px;top:574.20px;font-size:13.81px;line-height:15.42px;font-weight:700;color:#2a2a2a;font-family:'Liberation Sans', sans-serif;transform:scaleX(0.8209);">Last Name</div>
<div class="t" style="left:845.40px;top:574.20px;font-size:13.81px;line-height:15.42px;font-weight:700;color:#2a2a2a;font-family:'Liberation Sans', sans-serif;transform:scaleX(0.8924);">Mobile</div>
<div class="t" style="left:335.60px;top:605.46px;font-size:13.08px;line-height:14.61px;font-weight:400;color:#4a4a4a;font-family:'Liberation Sans', sans-serif;transform:scaleX(0.8352);">Select</div>
<svg class="r" style="left:417.8px;top:608.0px" width="6" height="7" viewBox="0 0 6 7"><path d="M0 0.5 L6 0.5 L3 7 Z" fill="#222"/></svg>
<div class="r" style="left:327.6px;top:627.5px;width:638.4px;height:15.5px;background:#f1f1f1;border-top:1px solid #dedede;box-sizing:border-box;"></div>
<div class="r" style="left:342px;top:629px;width:390px;height:13px;background:#c1c1c1;"></div>
<svg class="r" style="left:331px;top:631px" width="5" height="8" viewBox="0 0 5 8"><path d="M5 0 L0 4 L5 8 Z" fill="#a3a3a3"/></svg>
<svg class="r" style="left:955px;top:631px" width="5" height="8" viewBox="0 0 5 8"><path d="M0 0 L5 4 L0 8 Z" fill="#505050"/></svg>
<div class="t" style="left:328.00px;top:653.85px;font-size:14.53px;line-height:16.24px;font-weight:700;color:#2e2e2e;font-family:'Liberation Sans', sans-serif;transform:scaleX(0.9394);">Notes</div>
<div class="r" style="left:1021.5px;top:91px;width:112.0px;height:23.5px;background:#e3e3e3;border:1.5px solid #5c7590;border-radius:12px;box-sizing:border-box;"></div>
<div class="t" style="left:1033.00px;top:96.27px;font-size:13.52px;line-height:15.10px;font-weight:400;color:#4e6b89;font-family:'Liberation Sans', sans-serif;letter-spacing:0.6px;transform:scaleX(0.8066);">Upload Photo</div>
<svg class="r" style="left:1107.5px;top:93px" width="15" height="16" viewBox="0 0 15 16"><path d="M7.5 0 L12.5 5.5 L9.3 5.5 L9.3 10.5 L5.7 10.5 L5.7 5.5 L2.5 5.5 Z" fill="#1e8ff0"/><path d="M0 9 L2.5 9 L2.5 12.5 L12.5 12.5 L12.5 9 L15 9 L15 16 L0 16 Z" fill="#1e8ff0"/></svg>
<svg class="r" style="left:1020px;top:110px" width="115" height="112" viewBox="0 0 115 112"><path d="M10.5 110 L10.5 88 Q11 79 22 75 L40 68 Q45 66 45 62 L45 52 Q41 49 39.5 45 Q37 44 37 39 Q36.5 34 39 34 Q37 7 57.5 7 Q78 7 76 34 Q78.5 34 78 39 Q78 44 75.5 45 Q74 49 70 52 L70 62 Q70 66 75 68 L93 75 Q104 79 104.5 88 L104.5 110 Z" fill="#a5a5a5"/></svg>
<div class="t" style="left:986.00px;top:256.85px;font-size:14.53px;line-height:16.24px;font-weight:700;color:#2e2e2e;font-family:'Liberation Sans', sans-serif;transform:scaleX(0.9109);">Enrolling Information</div>
<div class="r" style="left:986px;top:271px;width:134px;height:1.3000000000000114px;background:#2e2e2e;"></div>
<div class="t" style="left:986.00px;top:290.72px;font-size:12.79px;line-height:14.29px;font-weight:700;color:#2e2e2e;font-family:'Liberation Sans', sans-serif;transform:scaleX(0.8096);">*Admission Info</div>
<div class="r" style="left:986px;top:308.8px;width:183.5px;height:26.599999999999966px;background:#fff;border:1px solid #e0e0e0;border-radius:4px;box-sizing:border-box;box-shadow:0 1px 1px rgba(0,0,0,0.05);"></div>
<div class="t" style="left:992.00px;top:315.66px;font-size:13.08px;line-height:14.61px;font-weight:400;color:#444;font-family:'Liberation Sans', sans-serif;transform:scaleX(0.7967);">Select</div>
<svg class="r" style="left:1157.5px;top:318.6px" width="6" height="7" viewBox="0 0 6 7"><path d="M0 0.5 L6 0.5 L3 7 Z" fill="#222"/></svg>
<div class="t" style="left:986.00px;top:346.22px;font-size:12.79px;line-height:14.29px;font-weight:700;color:#2e2e2e;font-family:'Liberation Sans', sans-serif;transform:scaleX(0.8175);">*Course Code</div>
<div class="r" style="left:986px;top:365px;width:183.5px;height:26.69999999999999px;background:#fff;border:1px solid #e0e0e0;border-radius:4px;box-sizing:border-box;box-shadow:0 1px 1px rgba(0,0,0,0.05);"></div>
<div class="t" style="left:992.00px;top:371.91px;font-size:13.08px;line-height:14.61px;font-weight:400;color:#444;font-family:'Liberation Sans', sans-serif;transform:scaleX(0.7967);">Select</div>
<svg class="r" style="left:1157.5px;top:374.85px" width="6" height="7" viewBox="0 0 6 7"><path d="M0 0.5 L6 0.5 L3 7 Z" fill="#222"/></svg>
<div class="t" style="left:986.00px;top:402.52px;font-size:12.79px;line-height:14.29px;font-weight:700;color:#2e2e2e;font-family:'Liberation Sans', sans-serif;transform:scaleX(0.8311);">*Batch</div>
<div class="r" style="left:986px;top:422px;width:183.5px;height:26px;background:#fff;border:1px solid #e0e0e0;border-radius:4px;box-sizing:border-box;box-shadow:0 1px 1px rgba(0,0,0,0.05);"></div>
<div class="t" style="left:992.00px;top:428.56px;font-size:13.08px;line-height:14.61px;font-weight:400;color:#444;font-family:'Liberation Sans', sans-serif;transform:scaleX(0.7967);">Select</div>
<svg class="r" style="left:1157.5px;top:431.5px" width="6" height="7" viewBox="0 0 6 7"><path d="M0 0.5 L6 0.5 L3 7 Z" fill="#222"/></svg>
<div class="t" style="left:986.00px;top:474.52px;font-size:12.79px;line-height:14.29px;font-weight:700;color:#2e2e2e;font-family:'Liberation Sans', sans-serif;transform:scaleX(0.8213);">*Application Type</div>
<div class="r" style="left:986px;top:494.3px;width:183.5px;height:25.400000000000034px;background:#fff;border:1px solid #e0e0e0;border-radius:4px;box-sizing:border-box;box-shadow:0 1px 1px rgba(0,0,0,0.05);"></div>
<div class="t" style="left:992.00px;top:500.56px;font-size:13.08px;line-height:14.61px;font-weight:400;color:#444;font-family:'Liberation Sans', sans-serif;transform:scaleX(0.7967);">Select</div>
<svg class="r" style="left:1157.5px;top:503.5px" width="6" height="7" viewBox="0 0 6 7"><path d="M0 0.5 L6 0.5 L3 7 Z" fill="#222"/></svg>
<div class="t" style="left:986.00px;top:542.02px;font-size:12.79px;line-height:14.29px;font-weight:700;color:#2e2e2e;font-family:'Liberation Sans', sans-serif;transform:scaleX(0.8155);">*Application Status</div>
<div class="r" style="left:986px;top:561.8px;width:183.5px;height:25.5px;background:#fff;border:1px solid #e0e0e0;border-radius:4px;box-sizing:border-box;box-shadow:0 1px 1px rgba(0,0,0,0.05);"></div>
<div class="t" style="left:992.00px;top:568.11px;font-size:13.08px;line-height:14.61px;font-weight:400;color:#444;font-family:'Liberation Sans', sans-serif;transform:scaleX(0.7967);">Select</div>
<svg class="r" style="left:1157.5px;top:571.05px" width="6" height="7" viewBox="0 0 6 7"><path d="M0 0.5 L6 0.5 L3 7 Z" fill="#222"/></svg>
<div class="r" style="left:991px;top:607.5px;width:140px;height:27.5px;background:#fff;border:1px solid #e0e0e0;border-radius:2px;box-sizing:border-box;box-shadow:0 1px 2px rgba(0,0,0,0.08);"></div>
<div class="t" style="left:1009.70px;top:612.97px;font-size:13.95px;line-height:15.59px;font-weight:400;color:#333;font-family:'Liberation Sans', sans-serif;transform:scaleX(0.8622);">Upload Documents</div>
<div class="r" style="left:1137px;top:621px;width:35px;height:39px;background:#dde9f6;"></div>
<svg class="r" style="left:1137px;top:621px" width="35" height="39" viewBox="0 0 35 39"><defs><linearGradient id="bg1" x1="0" y1="0" x2="0" y2="1"><stop offset="0" stop-color="#2a95f0"/><stop offset="1" stop-color="#1570d0"/></linearGradient></defs><ellipse cx="16.5" cy="16.5" rx="13.8" ry="13" fill="url(#bg1)"/><path d="M8 25 L5.5 35 L15 28.5 Z" fill="#1570d0"/><path d="M20 29.5 Q26 31 30 35 L23 30 Z" fill="#c9d6e3"/></svg>
<div class="r" style="left:1165px;top:610px;width:16px;height:18px;background:#4e6b89;border-radius:3px;"></div>
<div class="t" style="left:1169.50px;top:611.66px;font-size:13.08px;line-height:14.61px;font-weight:700;color:#fff;font-family:'Liberation Sans', sans-serif;transform:scaleX(0.9589);">0</div>
<div class="t" style="left:331.00px;top:535.01px;font-size:55.23px;line-height:61.69px;font-weight:700;color:#6e6e6e;font-family:'Liberation Sans', sans-serif;transform:scaleX(1.0281);-webkit-text-stroke:2.2px #6e6e6e;opacity:0.15;">SoftwareSuggest</div>
<div class="t" style="left:801.00px;top:548.17px;font-size:40.70px;line-height:45.46px;font-weight:700;color:#6e6e6e;font-family:'Liberation Sans', sans-serif;transform:scaleX(0.7611);-webkit-text-stroke:1.6px #6e6e6e;opacity:0.15;">.com</div>
</body></html>
